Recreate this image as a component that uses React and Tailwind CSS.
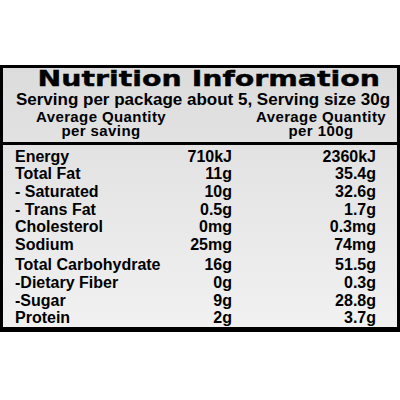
import React from 'react';

const rows = [
    { name: 'Energy', serving: '710kJ', per100: '2360kJ' },
    { name: 'Total Fat', serving: '11g', per100: '35.4g' },
    { name: '- Saturated', serving: '10g', per100: '32.6g' },
    { name: '- Trans Fat', serving: '0.5g', per100: '1.7g' },
    { name: 'Cholesterol', serving: '0mg', per100: '0.3mg' },
    { name: 'Sodium', serving: '25mg', per100: '74mg' },
    { name: 'Total Carbohydrate', serving: '16g', per100: '51.5g', gap: true },
    { name: '-Dietary Fiber', serving: '0g', per100: '0.3g' },
    { name: '-Sugar', serving: '9g', per100: '28.8g' },
    { name: 'Protein', serving: '2g', per100: '3.7g' },
];

const App = () => {
    return (
        <div className="w-[400px] h-[400px] bg-white pt-[65px] font-['Liberation_Sans',Arial,sans-serif] text-black">
            <div className="border-x-[3px] border-t-[3px] border-b-[5px] border-black bg-gradient-to-b from-[#dcdcdc] to-[#f1f1f1]">
                {/* Header */}
                <div className="border-b-[3px] border-black pb-[5px]">
                    <div className="h-[22px] text-center pl-[18px]">
                        <span className="inline-block font-['DejaVu_Sans',sans-serif] font-bold text-[22px] leading-[22px] scale-x-[1.29] [-webkit-text-stroke:0.4px_black]">
                            Nutrition Information
                        </span>
                    </div>
                    <div className="mt-px text-center pl-[6px] font-bold text-[17px] leading-[18px] whitespace-nowrap">
                        Serving per package about 5, Serving size 30g
                    </div>
                    <div className="flex mt-px font-bold text-[15px] tracking-[0.4px] leading-[13.5px]">
                        <div className="w-[196px] text-center">
                            <div>Average Quantity</div>
                            <div>per saving</div>
                        </div>
                        <div className="w-[150px] ml-[47px] text-center whitespace-nowrap">
                            <div>Average Quantity</div>
                            <div>per 100g</div>
                        </div>
                    </div>
                </div>

                {/* Rows */}
                <div className="pt-[2.6px] pl-[12px] font-bold text-[16px] leading-[17.7px]">
                    {rows.map((r) => (
                        <div key={r.name} className={`grid grid-cols-[172px_45px_144px] ${r.gap ? 'mt-[2.5px]' : ''}`}>
                            <div className="whitespace-nowrap">{r.name}</div>
                            <div className="text-right">{r.serving}</div>
                            <div className="text-right">{r.per100}</div>
                        </div>
                    ))}
                </div>
            </div>
        </div>
    );
};

export default App;
